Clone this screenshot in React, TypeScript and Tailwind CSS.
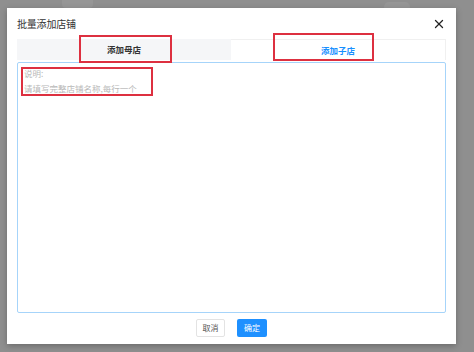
import { X } from "lucide-react";

export default function App() {
  return (
    <div
      className="relative w-[474px] h-[352px] overflow-hidden bg-[#8f8f8f]"
      style={{ fontFamily: '"Noto Sans CJK SC", "Noto Sans", sans-serif' }}
    >
      {/* dimmed page behind */}
      <div className="absolute left-[62px] top-0 w-[31px] h-[8px] rounded-b bg-[#969696]" />
      <div className="absolute left-[384px] top-[2px] w-[26px] h-[10px] rounded-full bg-[#969696]" />

      {/* Modal */}
      <div className="absolute left-[7px] top-[8px] w-[449px] h-[336px] bg-white shadow-[0_2px_6px_rgba(0,0,0,0.25)] flex flex-col px-[10px]">
        <div className="h-[31px] flex items-center justify-between">
          <span className="text-[10px] text-[#333] tracking-[-0.2px]">批量添加店铺</span>
          <X className="w-[14px] h-[14px] text-[#222]" strokeWidth={2.2} />
        </div>

        {/* Tabs */}
        <div className="flex h-[21px]">
          <div className="flex-1 bg-[#f5f6f8] flex items-center justify-center">
            <span className="text-[8.5px] font-bold text-[#333]">添加母店</span>
          </div>
          <div className="flex-1 bg-white flex items-center justify-center border-t border-r border-[#f0f0f0]">
            <span className="text-[8.5px] font-bold text-[#1890ff]">添加子店</span>
          </div>
        </div>

        {/* Textarea */}
        <div className="mt-[2px] h-[251px] border border-[#a6d4fa] rounded-[2px] px-[6px] pt-[3px] text-[8.5px] leading-[15px] text-[#b8b8b8]">
          <div>说明:</div>
          <div>请填写完整店铺名称,每行一个</div>
        </div>

        {/* Footer */}
        <div className="flex justify-center gap-[12px] mt-[6px]">
          <button className="w-[29px] h-[18px] border border-[#e3e3e3] rounded-[2px] bg-white text-[8px] text-[#555] flex items-center justify-center">
            取消
          </button>
          <button className="w-[30px] h-[18px] rounded-[2px] bg-[#1e90ff] text-[8px] text-white flex items-center justify-center">
            确定
          </button>
        </div>
      </div>

      {/* Annotation boxes */}
      <div className="absolute left-[79px] top-[35px] w-[93px] h-[28px] border-2 border-[#dd3040]" />
      <div className="absolute left-[273px] top-[33px] w-[101px] h-[28px] border-2 border-[#dd3040]" />
      <div className="absolute left-[21px] top-[67px] w-[132px] h-[29px] border-2 border-[#dd3040]" />
    </div>
  );
}
